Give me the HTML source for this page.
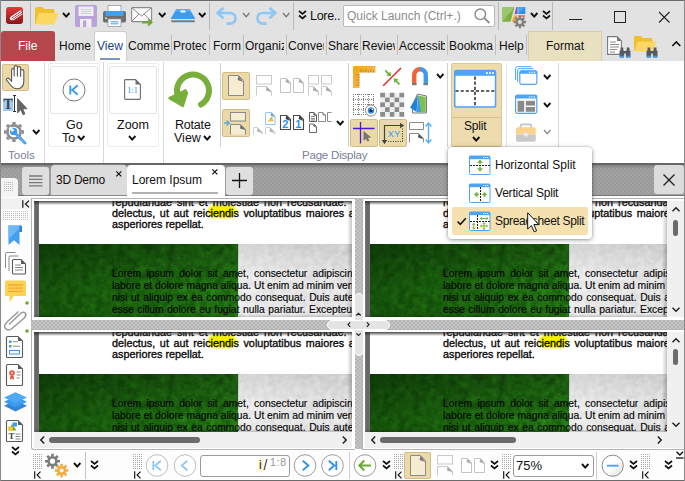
<!DOCTYPE html>
<html><head><meta charset="utf-8"><title>PDF-XChange Editor</title>
<style>
html,body{margin:0;padding:0}
body{width:685px;height:481px;position:relative;overflow:hidden;background:#e2e2e2;font-family:"Liberation Sans",sans-serif;font-size:12px;color:#111}
.a{position:absolute}
.t{position:absolute;white-space:nowrap;line-height:14px}
.vs{position:absolute;width:1px;background:#bdbdbd}
svg{position:absolute;overflow:visible}
.tan{position:absolute;background:#ecd9a8;border:1px solid #d2bd88;box-sizing:border-box;border-radius:2px}
.doc{position:absolute;overflow:hidden;background:#fff}
.dt{position:absolute;font-size:11px;line-height:12px;white-space:nowrap;color:#1a1a1a}
</style></head><body>
<!-- TITLE BAR -->
<div class="a" style="left:0;top:0;width:685px;height:61px;background:#e2e2e2"></div><svg style="left:6px;top:7px" width="17" height="17" viewBox="0 0 17 17"><defs><linearGradient id="ag" x1="0" y1="0" x2="0" y2="1"><stop offset="0" stop-color="#e23a3a"/><stop offset="1" stop-color="#8c1414"/></linearGradient></defs><clipPath id="ac"><rect x="0" y="0" width="17" height="17" rx="3"/></clipPath><rect x="0" y="0" width="17" height="17" rx="3" fill="url(#ag)"/><g clip-path="url(#ac)"><path d="M2.6 13.2 L4.4 9.6 L15 2.6 Q16.6 4.6 16.8 7.4 L7.6 13.6 Z" fill="#fff" stroke="#7a1010" stroke-width=".5"/><path d="M5.4 11.2 L15.8 4.2 M6.6 12.5 L16.5 5.9" stroke="#c0282c" stroke-width=".9" fill="none"/><path d="M2.6 13.2 L3.5 11.4 L4.8 13.3 Z" fill="#7a1010"/></g></svg><div class="vs" style="left:30px;top:2px;height:28px;background:#b9b9b9"></div><svg style="left:35px;top:7px" width="24" height="18" viewBox="0 0 24 18"><path d="M0 1.5 Q0 0 1.5 0 L7.5 0 L9.5 2 L18 2 Q19.5 2 19.5 3.5 L19.5 17 L0 17 Z" fill="#efbf2d"/><path d="M3.8 6 L23.5 6 L19.5 17.5 L0.2 17.5 Z" fill="#fcd762"/></svg><svg style="left:63.3px;top:13px" width="6.4" height="4.6"><polyline points="0,0 3.2,3.6 6.4,0" fill="none" stroke="#111" stroke-width="1.9"/></svg><svg style="left:75px;top:5px" width="22" height="22" viewBox="0 0 22 22"><rect x="0" y="0" width="22" height="22" rx="2" fill="#b7a3d9"/><rect x="3.5" y="1.5" width="15" height="9.5" fill="#eee"/><path d="M6 4.5h10M6 6.5h10M6 8.5h10" stroke="#c9c9c9" stroke-width=".8"/><rect x="5" y="14" width="11.5" height="8" fill="#eee"/><rect x="8" y="15.5" width="3.2" height="6.5" fill="#b7a3d9"/></svg><svg style="left:103px;top:5px" width="23" height="22" viewBox="0 0 23 22"><rect x="5" y="0.5" width="13" height="7" fill="#fff" stroke="#9a9a9a" stroke-width=".8"/><rect x="0" y="6" width="23" height="11.5" rx="2" fill="#6e6e6e"/><rect x="2.5" y="6" width="18" height="5" fill="#3fa0f0"/><rect x="5" y="14" width="13" height="7.5" fill="#fff" stroke="#9a9a9a" stroke-width=".8"/><path d="M7.5 16.8h8M7.5 18.8h8" stroke="#3fa0f0" stroke-width="1"/><rect x="2" y="12.5" width="2" height="1.5" fill="#ddd"/></svg><svg style="left:131px;top:7px" width="23" height="19" viewBox="0 0 23 19"><rect x="0.6" y="0.6" width="20" height="14" rx="1" fill="#fafafa" stroke="#8a8a8a" stroke-width="1.1"/><path d="M1 1 L10.6 9 L20.2 1 M1 14 L8 7 M20.2 14 L13.2 7" fill="none" stroke="#8a8a8a" stroke-width="1"/><path d="M11 15.5h9M17 12.3l3.6 3.2-3.6 3.2" fill="none" stroke="#6aa82e" stroke-width="1.8"/></svg><svg style="left:159.3px;top:13px" width="6.4" height="4.6"><polyline points="0,0 3.2,3.6 6.4,0" fill="none" stroke="#111" stroke-width="1.9"/></svg><svg style="left:170px;top:9px" width="26" height="14" viewBox="0 0 26 14"><path d="M6.5 0 L19.5 0 L25.5 10 L0.5 10 Z" fill="#3d9bee"/><path d="M6.5 0 L19.5 0 L21 2.6 L5 2.6 Z" fill="#57b0f7"/><rect x="10.5" y="1.6" width="5" height="1.8" rx=".5" fill="#fff"/><rect x="1" y="11.2" width="24" height="2" rx="1" fill="#7b7b7b"/></svg><svg style="left:199.3px;top:13px" width="6.4" height="4.6"><polyline points="0,0 3.2,3.6 6.4,0" fill="none" stroke="#111" stroke-width="1.9"/></svg><div class="vs" style="left:209px;top:2px;height:28px;background:#b9b9b9"></div><svg style="left:216px;top:7px" width="21" height="18" viewBox="0 0 21 18"><path d="M7.5 0.8 L1.6 6 L7.5 11.2 M2 6 L13.5 6 Q19.5 6 19.5 11.3 Q19.5 16.6 13.5 16.6 L10.5 16.6" fill="none" stroke="#8ec6f5" stroke-width="2.6"/></svg><svg style="left:243.3px;top:13px" width="6.4" height="4.6"><polyline points="0,0 3.2,3.6 6.4,0" fill="none" stroke="#7a7a7a" stroke-width="1.4"/></svg><svg style="left:256px;top:7px" width="21" height="18" viewBox="0 0 21 18"><path d="M13.5 0.8 L19.4 6 L13.5 11.2 M19 6 L7.5 6 Q1.5 6 1.5 11.3 Q1.5 16.6 7.5 16.6 L10.5 16.6" fill="none" stroke="#8ec6f5" stroke-width="2.6"/></svg><svg style="left:283.3px;top:13px" width="6.4" height="4.6"><polyline points="0,0 3.2,3.6 6.4,0" fill="none" stroke="#7a7a7a" stroke-width="1.4"/></svg><div class="vs" style="left:293px;top:2px;height:28px;background:#b9b9b9"></div><svg style="left:299px;top:11px" width="7" height="9"><polyline points="0,0 3.5,3 7,0" fill="none" stroke="#111" stroke-width="1.7"/><polyline points="0,4.5 3.5,7.5 7,4.5" fill="none" stroke="#111" stroke-width="1.7"/></svg><div class="t" style="left:310px;top:9px;font-size:12.5px;letter-spacing:-.3px">Lore..</div><div class="a" style="left:343px;top:5px;width:152px;height:22px;box-sizing:border-box;background:#fff;border:1px solid #b9b9b9;border-radius:2px"></div><div class="t" style="left:347px;top:9px;color:#8c8c8c">Quick Launch (Ctrl+.)</div><svg style="left:474px;top:8px" width="17" height="16" viewBox="0 0 17 16"><circle cx="6.3" cy="6.3" r="5.3" fill="none" stroke="#8a8a8a" stroke-width="1.4"/><path d="M10.2 10.2 L15.5 15" stroke="#8a8a8a" stroke-width="1.8"/></svg><div class="vs" style="left:498px;top:2px;height:28px;background:#b9b9b9"></div><svg style="left:0;top:0" width="685" height="32"><defs><linearGradient id="gt" x1="0" y1="0" x2="1" y2="1"><stop offset="0.5" stop-color="#9cc56e"/><stop offset="0.5" stop-color="#7db343"/></linearGradient></defs><path d="M503.5 7 H514.5 L510.5 21.8 H503.5 Q502 21.8 502 20.3 V8.5 Q502 7 503.5 7Z" fill="url(#gt)"/><path d="M516.4 7H517.6V14H514.4Z" fill="#7e57c2"/><rect x="518.2" y="7" width="7" height="7" fill="#42a5f5"/><path d="M518.2 14L525.2 7V14Z" fill="#2f8fe6"/><path d="M514 15.2H517.4V21.8H511.6Z" fill="#f5a93a"/><rect x="518.2" y="15.2" width="7" height="1.6" fill="#ef6c4a"/><circle cx="519.9" cy="22" r="3.1" fill="none" stroke="#808080" stroke-width="2.3"/><path d="M523.30 22.00L526.11 22.00M522.30 24.40L524.29 26.39M519.90 25.40L519.90 28.20M517.50 24.40L515.51 26.39M516.50 22.00L513.69 22.00M517.50 19.60L515.51 17.61M519.90 18.60L519.90 15.79M522.30 19.60L524.29 17.61" stroke="#808080" stroke-width="2.3"/></svg><svg style="left:531.3px;top:13.3px" width="6.4" height="4.6"><polyline points="0,0 3.2,3.6 6.4,0" fill="none" stroke="#111" stroke-width="1.9"/></svg><svg style="left:543px;top:11px" width="7" height="9"><polyline points="0,0 3.5,3 7,0" fill="none" stroke="#111" stroke-width="1.7"/><polyline points="0,4.5 3.5,7.5 7,4.5" fill="none" stroke="#111" stroke-width="1.7"/></svg><div class="vs" style="left:552px;top:2px;height:28px;background:#b9b9b9"></div><div class="a" style="left:569px;top:19px;width:13px;height:1.2px;background:#222"></div><div class="a" style="left:614px;top:11px;width:12px;height:12px;box-sizing:border-box;border:1.1px solid #222"></div><svg style="left:659px;top:12px" width="11" height="11"><path d="M0 0L10.5 10.5M10.5 0L0 10.5" stroke="#222" stroke-width="1.1"/></svg><div class="a" style="left:1px;top:31px;width:54px;height:29.5px;background:#b4474b;border-radius:3px 3px 0 0"></div><div class="t" style="left:18px;top:39px;color:#fff">File</div><div class="t" style="left:59px;top:39px;">Home</div><div class="a" style="left:94px;top:31px;width:33px;height:31px;box-sizing:border-box;background:#fff;border:1px solid #cfcfcf;border-bottom:none;border-radius:3px 3px 0 0"></div><div class="t" style="left:97px;top:39px;color:#1b3f7a">View</div><div class="a" style="left:100px;top:58px;width:20px;height:2px;background:#7d97c4"></div><div class="a" style="left:128px;top:36px;width:42px;height:18px;overflow:hidden"><div class="t" style="left:0;top:3px">Comments</div></div><div class="vs" style="left:171px;top:35px;height:20px;background:#bdbdbd"></div><div class="a" style="left:173px;top:36px;width:33px;height:18px;overflow:hidden"><div class="t" style="left:0;top:3px">Protect</div></div><div class="vs" style="left:209px;top:35px;height:20px;background:#bdbdbd"></div><div class="a" style="left:213px;top:36px;width:28px;height:18px;overflow:hidden"><div class="t" style="left:0;top:3px">Form</div></div><div class="vs" style="left:243px;top:35px;height:20px;background:#bdbdbd"></div><div class="a" style="left:245px;top:36px;width:39px;height:18px;overflow:hidden"><div class="t" style="left:0;top:3px">Organize</div></div><div class="vs" style="left:286px;top:35px;height:20px;background:#bdbdbd"></div><div class="a" style="left:288px;top:36px;width:36px;height:18px;overflow:hidden"><div class="t" style="left:0;top:3px">Convert</div></div><div class="vs" style="left:326px;top:35px;height:20px;background:#bdbdbd"></div><div class="a" style="left:328px;top:36px;width:30px;height:18px;overflow:hidden"><div class="t" style="left:0;top:3px">Share</div></div><div class="vs" style="left:360px;top:35px;height:20px;background:#bdbdbd"></div><div class="a" style="left:362px;top:36px;width:33px;height:18px;overflow:hidden"><div class="t" style="left:0;top:3px">Review</div></div><div class="vs" style="left:397px;top:35px;height:20px;background:#bdbdbd"></div><div class="a" style="left:399px;top:36px;width:46px;height:18px;overflow:hidden"><div class="t" style="left:0;top:3px">Accessibility</div></div><div class="vs" style="left:447px;top:35px;height:20px;background:#bdbdbd"></div><div class="a" style="left:449px;top:36px;width:43.5px;height:18px;overflow:hidden"><div class="t" style="left:0;top:3px">Bookmarks</div></div><div class="vs" style="left:495px;top:35px;height:20px;background:#bdbdbd"></div><div class="t" style="left:499px;top:39px;">Help</div><div class="vs" style="left:526px;top:35px;height:20px;background:#bdbdbd"></div><div class="a" style="left:528px;top:31px;width:74px;height:30px;box-sizing:border-box;background:#e8e0bf;border:1px solid #d9cfa6;border-bottom:none"></div><div class="t" style="left:546px;top:39px;">Format</div><svg style="left:607px;top:36px" width="24" height="22" viewBox="0 0 24 22"><path d="M0.6 0.6 L10 0.6 L14.4 5 L14.4 18.4 L0.6 18.4 Z" fill="#fff" stroke="#7a7a7a" stroke-width="1.1"/><path d="M10 0.6 L10 5 L14.4 5 Z" fill="#7a7a7a"/><path d="M3 6h6M3 8.5h9M3 11h9M3 13.5h7M3 16h5" stroke="#8a8a8a" stroke-width="1"/><g transform="translate(12.5,11.5)"><g fill="#555a62"><rect x="0" y="3" width="4.6" height="7" rx="1"/><rect x="6.4" y="3" width="4.6" height="7" rx="1"/><rect x="1" y="0" width="2.8" height="4" /><rect x="7.2" y="0" width="2.8" height="4"/><rect x="4" y="3.5" width="3" height="2.5"/></g><rect x="0.3" y="8.2" width="4" height="1.8" fill="#3d9bee"/><rect x="6.7" y="8.2" width="4" height="1.8" fill="#3d9bee"/></g></svg><svg style="left:634px;top:36px" width="24" height="22" viewBox="0 0 24 22"><path d="M0 1.5 Q0 0 1.5 0 L7 0 L9 2 L17 2 Q18.5 2 18.5 3.5 L18.5 15 L0 15 Z" fill="#efbf2d"/><path d="M3.5 5.5 L22.5 5.5 L18.5 15.5 L0.2 15.5 Z" fill="#fcd762"/><g transform="translate(12.5,11.5)"><g fill="#555a62"><rect x="0" y="3" width="4.6" height="7" rx="1"/><rect x="6.4" y="3" width="4.6" height="7" rx="1"/><rect x="1" y="0" width="2.8" height="4" /><rect x="7.2" y="0" width="2.8" height="4"/><rect x="4" y="3.5" width="3" height="2.5"/></g><rect x="0.3" y="8.2" width="4" height="1.8" fill="#3d9bee"/><rect x="6.7" y="8.2" width="4" height="1.8" fill="#3d9bee"/></g></svg><svg style="left:672px;top:41px" width="9" height="6"><polyline points="0.3,5 4.3,1 8.3,5" fill="none" stroke="#111" stroke-width="1.7"/></svg>
<!-- RIBBON -->
<div class="a" style="left:1px;top:61px;width:683px;height:102px;background:#fff"></div><div class="a" style="left:0;top:163px;width:685px;height:1px;background:#cfcfcf"></div><div class="tan" style="left:2px;top:64px;width:27px;height:27px"></div><svg style="left:5px;top:64px" width="21" height="26" viewBox="0 0 21 26"><path d="M6.6 17 L6.6 6 Q6.6 4.6 7.9 4.6 Q9.2 4.6 9.2 6 L9.2 12 L9.2 3 Q9.2 1.6 10.8 1.6 Q12.4 1.6 12.4 3 L12.4 12 L12.4 4 Q12.4 2.6 14 2.6 Q15.6 2.6 15.6 4 L15.6 12.5 L15.6 7 Q15.6 5.6 17.2 5.6 Q18.8 5.6 18.8 7 L18.8 17 Q18.8 24.8 12.2 24.8 Q8.6 24.8 6.4 22 L1.6 16.2 Q0.9 15 2 14.4 Q3.3 13.8 4.3 14.8 L6.6 17.3 Z" fill="#fff" stroke="#5a5a5a" stroke-width="1.1" stroke-linejoin="round"/></svg><div class="a" style="left:3px;top:98px;width:10px;height:13px;background:#9fcbf3"></div><div class="t" style="left:3.5px;top:97px;font-family:'Liberation Serif',serif;font-weight:bold;font-size:14px;line-height:15px;color:#444">T</div><svg style="left:12px;top:95px" width="16" height="21" viewBox="0 0 16 21"><path d="M1 0.5h3M2.5 0.5v16M1 16.5h3" stroke="#333" stroke-width="1" fill="none"/><path d="M5.5 3.5 L5.5 18 L8.8 14.8 L11 19.8 L13 18.9 L10.8 14 L15 13.6 Z" fill="#666" stroke="#444" stroke-width=".6"/></svg><svg style="left:0;top:0" width="48" height="170"><circle cx="14" cy="132" r="6.6" fill="none" stroke="#8e8e8e" stroke-width="2.7"/><path d="M21.50 132.00L24.00 132.00M19.30 137.30L21.07 139.07M14.00 139.50L14.00 142.00M8.70 137.30L6.93 139.07M6.50 132.00L4.00 132.00M8.70 126.70L6.93 124.93M14.00 124.50L14.00 122.00M19.30 126.70L21.07 124.93" stroke="#8e8e8e" stroke-width="3.3"/><path d="M15.5 133.5L25 143" stroke="#3d9bee" stroke-width="2.8" stroke-linecap="round"/><path d="M15.5 133.5L25 143" stroke="#bfe0fb" stroke-width="1" stroke-dasharray="0.8 1"/><circle cx="13.6" cy="131.4" r="3.7" fill="#3d9bee"/><path d="M9.5 127.5L13.3 131" stroke="#fff" stroke-width="2.6"/></svg><svg style="left:32.8px;top:130.2px" width="6.4" height="4.6"><polyline points="0,0 3.2,3.6 6.4,0" fill="none" stroke="#111" stroke-width="1.9"/></svg><div class="t" style="left:8px;top:148px;color:#777e96;font-size:11.5px">Tools</div><div class="vs" style="left:44px;top:62px;height:101px;background:#d8d8d8"></div><div class="a" style="left:48px;top:63px;width:52px;height:84px;box-sizing:border-box;border:1px solid #ececec;border-radius:2px"></div><div class="a" style="left:50px;top:66px;width:48px;height:48px;box-sizing:border-box;border:1px solid #e3e3e3;border-radius:2px"></div><svg style="left:62px;top:78px" width="24" height="24" viewBox="0 0 24 24"><circle cx="12" cy="12" r="11" fill="#fff" stroke="#7d7d7d" stroke-width="1"/><path d="M8.3 7.5V16.5M15.7 7.3L10.3 12L15.7 16.7" fill="none" stroke="#3d9bee" stroke-width="1.9"/></svg><div class="t" style="left:66px;top:118px;font-size:12.5px">Go</div><div class="t" style="left:62px;top:131px;font-size:12.5px">To</div><svg style="left:78.3px;top:136px" width="6.4" height="4.6"><polyline points="0,0 3.2,3.6 6.4,0" fill="none" stroke="#111" stroke-width="1.9"/></svg><div class="vs" style="left:103px;top:62px;height:101px;background:#d8d8d8"></div><div class="a" style="left:107px;top:63px;width:52px;height:84px;box-sizing:border-box;border:1px solid #ececec;border-radius:2px"></div><div class="a" style="left:109px;top:66px;width:48px;height:48px;box-sizing:border-box;border:1px solid #e3e3e3;border-radius:2px"></div><svg style="left:124px;top:79px" width="18" height="22" viewBox="0 0 18 22"><path d="M1.5 0.6 L11.5 0.6 L16.4 5.5 L16.4 19.5 Q16.4 20.4 15.5 20.4 L1.5 20.4 Q0.6 20.4 0.6 19.5 L0.6 1.5 Q0.6 0.6 1.5 0.6 Z" fill="#fff" stroke="#6e6e6e" stroke-width="1.1"/><path d="M11.5 0.6 L16.4 5.5 L11.5 5.5 Z" fill="#6e6e6e"/></svg><div class="t" style="left:127px;top:85px;font-family:'Liberation Serif',serif;font-size:9px;line-height:10px;color:#3d9bee;letter-spacing:-.3px">1:1</div><div class="t" style="left:117px;top:118px;font-size:12.5px">Zoom</div><svg style="left:129.3px;top:136px" width="6.4" height="4.6"><polyline points="0,0 3.2,3.6 6.4,0" fill="none" stroke="#111" stroke-width="1.9"/></svg><div class="vs" style="left:163px;top:62px;height:101px;background:#d8d8d8"></div><svg style="left:160px;top:62px" width="60" height="50" viewBox="0 0 60 50"><path d="M17.6 33 A16 16 0 1 1 41 42.5" fill="none" stroke="#7aae3c" stroke-width="6" stroke-linecap="round"/><path d="M9.5 36.2 L25.5 28.3 L27 31 L22.8 44 Z" fill="#7aae3c" stroke="#7aae3c" stroke-width="2.4" stroke-linejoin="round"/></svg><div class="t" style="left:175px;top:118px;font-size:12.5px;letter-spacing:-.2px">Rotate</div><div class="t" style="left:174px;top:131px;font-size:12.5px">View</div><svg style="left:204.3px;top:136px" width="6.4" height="4.6"><polyline points="0,0 3.2,3.6 6.4,0" fill="none" stroke="#111" stroke-width="1.9"/></svg><div class="vs" style="left:220px;top:63px;height:84px;background:#d0d0d0"></div><div class="tan" style="left:222px;top:72px;width:28px;height:28px"></div><div class="tan" style="left:222px;top:109px;width:28px;height:28px"></div><svg style="left:0;top:0" width="685" height="170" viewBox="0 0 685 170"><path d="M228.5 75.5 L238.5 75.5 L243.5 80.5 L243.5 95.5 L228.5 95.5 Z" fill="#f6ecd2" stroke="#8a8a8a" stroke-width="1" stroke-linejoin="round"/><path d="M238.5 75.5 L243.5 82.0 L237.5 80.0 Z" fill="#7a7a7a"/><rect x="256.5" y="75.5" width="15" height="8.5" fill="none" stroke="#c9c9c9" stroke-width="1"/><path d="M256.5 95.5 L256.5 86.5 L266.5 86.5 L271.5 91.5 L271.5 95.5" fill="none" stroke="#c9c9c9" stroke-width="1"/><path d="M266.5 86.5 L271.8 92.3 L266.0 90.5 Z" fill="#a8a8a8"/><path d="M280.5 78.5 L286.5 78.5 L290.5 82.5 L290.5 92.5 L280.5 92.5 Z" fill="#fff" stroke="#c4c4c4" stroke-width="1" stroke-linejoin="round"/><path d="M286.5 78.5 L290.5 84.0 L285.5 82.0 Z" fill="#a8a8a8"/><path d="M293.5 78.5 L299.5 78.5 L303.5 82.5 L303.5 92.5 L293.5 92.5 Z" fill="#fff" stroke="#c4c4c4" stroke-width="1" stroke-linejoin="round"/><path d="M299.5 78.5 L303.5 84.0 L298.5 82.0 Z" fill="#a8a8a8"/><rect x="308.5" y="75.5" width="10" height="8.5" fill="none" stroke="#c9c9c9" stroke-width="1"/><rect x="321.5" y="75.5" width="10" height="8.5" fill="none" stroke="#c9c9c9" stroke-width="1"/><path d="M308.5 95.5 L308.5 86.5 L313.5 86.5 L318.5 91.5 L318.5 95.5" fill="none" stroke="#c9c9c9" stroke-width="1"/><path d="M313.5 86.5 L318.8 92.3 L313.0 90.5 Z" fill="#a8a8a8"/><path d="M321.5 95.5 L321.5 86.5 L326.5 86.5 L331.5 91.5 L331.5 95.5" fill="none" stroke="#c9c9c9" stroke-width="1"/><path d="M326.5 86.5 L331.8 92.3 L326.0 90.5 Z" fill="#a8a8a8"/><rect x="230.5" y="112.5" width="15" height="8.5" fill="#f6ecd2" stroke="#8a8a8a" stroke-width="1"/><path d="M230.5 134.5 L230.5 124.5 L240.5 124.5 L245.5 129.5 L245.5 134.5" fill="#f6ecd2" stroke="#8a8a8a" stroke-width="1"/><path d="M240.5 124.5 L245.8 130.3 L240.0 128.5 Z" fill="#6e6e6e"/><path d="M224 123h4M226.5 120.5l2.8 2.5-2.8 2.5" fill="none" stroke="#5aa9e6" stroke-width="1.5"/><path d="M265.5 112.5 L271.5 112.5 L275.0 116.0 L275.0 124.5 L265.5 124.5 Z" fill="#fff" stroke="#8ec6f5" stroke-width="1" stroke-linejoin="round"/><path d="M271.5 112.5 L275.0 117.5 L270.5 115.5 Z" fill="#7a9ab8"/><path d="M267.5 121.5l2.5-3 2 1.8 1.5-1 0 2.2z" fill="#f0c040"/><circle cx="271.5" cy="118.5" r="1.2" fill="#8bc34a"/><path d="M253.5 134.5 L253.5 127.5 L257.5 127.5 L262.5 132.5 L262.5 134.5" fill="none" stroke="#d0d0d0" stroke-width="1"/><path d="M257.5 127.5 L262.8 133.3 L257.0 131.5 Z" fill="#b5b5b5"/><path d="M265.5 134.5 L265.5 127.5 L270.0 127.5 L275.0 132.5 L275.0 134.5" fill="none" stroke="#d0d0d0" stroke-width="1"/><path d="M270.0 127.5 L275.3 133.3 L269.5 131.5 Z" fill="#b5b5b5"/><path d="M280.5 115.5 L286.5 115.5 L290.5 119.5 L290.5 129.5 L280.5 129.5 Z" fill="#fff" stroke="#4a4a4a" stroke-width="1.1" stroke-linejoin="round"/><path d="M286.5 115.5 L290.5 121.0 L285.5 119.0 Z" fill="#3a3a3a"/><path d="M293.5 115.5 L299.5 115.5 L303.5 119.5 L303.5 129.5 L293.5 129.5 Z" fill="#fff" stroke="#4a4a4a" stroke-width="1.1" stroke-linejoin="round"/><path d="M299.5 115.5 L303.5 121.0 L298.5 119.0 Z" fill="#3a3a3a"/><path d="M309.5 112.5 L314.0 112.5 L316.5 115.0 L316.5 121.5 L309.5 121.5 Z" fill="#fff" stroke="#5a5a5a" stroke-width="1" stroke-linejoin="round"/><path d="M314.0 112.5 L316.5 116.5 L313.0 114.5 Z" fill="#5a5a5a"/><path d="M311 116.5h4M311 118.5h4M311 120h4" stroke="#5a5a5a" stroke-width=".8"/><path d="M318.5 112.5 L323.0 112.5 L325.5 115.0 L325.5 121.5 L318.5 121.5 Z" fill="#fff" stroke="#8a8a8a" stroke-width="1" stroke-linejoin="round"/><path d="M323.0 112.5 L325.5 116.5 L322.0 114.5 Z" fill="#8a8a8a"/><path d="M331.5 112.5h-4v9h4" fill="none" stroke="#8a8a8a" stroke-width="1"/><path d="M309.5 124 L314.0 124 L316.5 126.5 L316.5 132.5 L309.5 132.5 Z" fill="#fff" stroke="#6a6a6a" stroke-width="1" stroke-linejoin="round"/><path d="M314.0 124 L316.5 128.0 L313.0 126.0 Z" fill="#6a6a6a"/></svg><div class="t" style="left:282.3px;top:118.5px;font-size:11px;line-height:11px;color:#2f93ea;font-weight:bold">2</div><div class="t" style="left:295.3px;top:118.5px;font-size:11px;line-height:11px;color:#2f93ea;font-weight:bold">1</div><svg style="left:337.3px;top:120.5px" width="6.4" height="4.6"><polyline points="0,0 3.2,3.6 6.4,0" fill="none" stroke="#111" stroke-width="1.9"/></svg><div class="t" style="left:302px;top:148px;color:#777e96;font-size:11.5px;letter-spacing:-.2px">Page Display</div><div class="vs" style="left:348px;top:63px;height:84px;background:#d0d0d0"></div><div class="tan" style="left:350px;top:119px;width:28px;height:28px"></div><div class="tan" style="left:379px;top:119px;width:28px;height:28px"></div><svg style="left:0;top:0" width="685" height="170" viewBox="0 0 685 170"><defs><linearGradient id="rul" x1="0" y1="0" x2="1" y2="1"><stop offset="0" stop-color="#f5a01e"/><stop offset="1" stop-color="#fbc566"/></linearGradient></defs><path d="M354.5 66 L375.5 66 L375.5 72.5 L359.5 72.5 L359.5 88 L353 88 L353 67.5 Q353 66 354.5 66 Z" fill="url(#rul)"/><path d="M361 69v3.5M363.5 70.5v2M366 69v3.5M368.5 70.5v2M371 69v3.5M373.5 70.5v2M356 75h3.5M357.5 77.5h2M356 80h3.5M357.5 82.5h2M356 85h3.5" stroke="#b97814" stroke-width=".8"/><path d="M383.2 85.8 L401 67.9" stroke="#e8212b" stroke-width="1.4"/><path d="M385.3 70.3 L388.6 73.8" stroke="#6fb13a" stroke-width="1.8"/><path d="M391.2 76.6 L386.3 75.6 L390.4 71.7 Z" fill="#6fb13a"/><path d="M399.4 84.4 L396.1 80.9" stroke="#6fb13a" stroke-width="1.8"/><path d="M393.6 78.2 L398.5 79.2 L394.4 83.1 Z" fill="#6fb13a"/><path d="M414.2 85 L414.2 75 A5.8 5.8 0 0 1 420 69.2" fill="none" stroke="#f0643c" stroke-width="4.4"/><path d="M420 69.2 A5.8 5.8 0 0 1 425.8 75 L425.8 85" fill="none" stroke="#3d9bee" stroke-width="4.4"/><rect x="412" y="83" width="4.4" height="2.2" fill="#7a7a7a"/><rect x="423.6" y="83" width="4.4" height="2.2" fill="#7a7a7a"/><path d="M353 94.5h21" stroke="#7d7d7d" stroke-width="1" stroke-dasharray="1 1"/><path d="M353.5 94v21" stroke="#7d7d7d" stroke-width="1" stroke-dasharray="1 1"/><path d="M353 99.5h21" stroke="#7d7d7d" stroke-width="1" stroke-dasharray="1 1"/><path d="M358.5 94v21" stroke="#7d7d7d" stroke-width="1" stroke-dasharray="1 1"/><path d="M353 104.5h21" stroke="#7d7d7d" stroke-width="1" stroke-dasharray="1 1"/><path d="M363.5 94v21" stroke="#7d7d7d" stroke-width="1" stroke-dasharray="1 1"/><path d="M353 109.5h21" stroke="#7d7d7d" stroke-width="1" stroke-dasharray="1 1"/><path d="M368.5 94v21" stroke="#7d7d7d" stroke-width="1" stroke-dasharray="1 1"/><path d="M353 114.5h21" stroke="#7d7d7d" stroke-width="1" stroke-dasharray="1 1"/><path d="M373.5 94v21" stroke="#7d7d7d" stroke-width="1" stroke-dasharray="1 1"/><circle cx="371" cy="110.5" r="5.6" fill="#fff" stroke="#8a8a8a" stroke-width="1"/><circle cx="371" cy="110.5" r="3.3" fill="#3d8fe0"/><circle cx="371" cy="110.5" r="1.6" fill="#1a2a3a"/><circle cx="372.3" cy="109.3" r=".8" fill="#fff"/><rect x="380.2" y="92.8" width="4.8" height="4.8" fill="#8c8c8c"/><rect x="385.0" y="92.8" width="4.8" height="4.8" fill="#efefef"/><rect x="389.8" y="92.8" width="4.8" height="4.8" fill="#8c8c8c"/><rect x="394.6" y="92.8" width="4.8" height="4.8" fill="#efefef"/><rect x="399.4" y="92.8" width="4.8" height="4.8" fill="#8c8c8c"/><rect x="380.2" y="97.6" width="4.8" height="4.8" fill="#efefef"/><rect x="385.0" y="97.6" width="4.8" height="4.8" fill="#8c8c8c"/><rect x="389.8" y="97.6" width="4.8" height="4.8" fill="#efefef"/><rect x="394.6" y="97.6" width="4.8" height="4.8" fill="#8c8c8c"/><rect x="399.4" y="97.6" width="4.8" height="4.8" fill="#efefef"/><rect x="380.2" y="102.4" width="4.8" height="4.8" fill="#8c8c8c"/><rect x="385.0" y="102.4" width="4.8" height="4.8" fill="#efefef"/><rect x="389.8" y="102.4" width="4.8" height="4.8" fill="#8c8c8c"/><rect x="394.6" y="102.4" width="4.8" height="4.8" fill="#efefef"/><rect x="399.4" y="102.4" width="4.8" height="4.8" fill="#8c8c8c"/><rect x="380.2" y="107.2" width="4.8" height="4.8" fill="#efefef"/><rect x="385.0" y="107.2" width="4.8" height="4.8" fill="#8c8c8c"/><rect x="389.8" y="107.2" width="4.8" height="4.8" fill="#efefef"/><rect x="394.6" y="107.2" width="4.8" height="4.8" fill="#8c8c8c"/><rect x="399.4" y="107.2" width="4.8" height="4.8" fill="#efefef"/><rect x="380.2" y="112.0" width="4.8" height="4.8" fill="#8c8c8c"/><rect x="385.0" y="112.0" width="4.8" height="4.8" fill="#efefef"/><rect x="389.8" y="112.0" width="4.8" height="4.8" fill="#8c8c8c"/><rect x="394.6" y="112.0" width="4.8" height="4.8" fill="#efefef"/><rect x="399.4" y="112.0" width="4.8" height="4.8" fill="#8c8c8c"/><path d="M417.5 94 L426.5 96 L426.5 113 L412.5 113 L412.5 105 Z" fill="#f2f2f2" stroke="#7a7a7a" stroke-width="1"/><path d="M418 95 L410 107.5 L416.5 112 Z" fill="#1f84d6"/><path d="M418.5 95.5 L425.7 97 L425.7 112.3 L417 112.3 Z" fill="#7fbf4d"/><path d="M418.5 95 L416.5 112.3 L421 112.3 Z" fill="#3d9bee"/><path d="M360.5 122V143.5M353 128.5H374.5" stroke="#4a1fd0" stroke-width="1.3"/><path d="M363.8 131.5 L363.8 140.3 L366 138.4 L367.7 141.3 L369.1 140.6 L367.5 137.7 L370.7 137.3 Z" fill="#777" stroke="#555" stroke-width=".4"/><path d="M384.5 142 V125.5 H402" fill="none" stroke="#444" stroke-width="1.2"/><path d="M400 122.8 L404.3 125.5 L400 128.2 Z M381.8 140 L384.5 144.3 L387.2 140 Z" fill="#444"/><path d="M402.5 128.5V141.5H387" fill="none" stroke="#444" stroke-width="1.1" stroke-dasharray="1.1 1.3"/><path d="M409.5 122.5H423.5V129.5H409.5Z" fill="none" stroke="#8a8a8a" stroke-width="1"/><path d="M409.5 142.5 L409.5 133.5 L418.5 133.5 L423.5 138.5 L423.5 142.5" fill="none" stroke="#8a8a8a" stroke-width="1"/><path d="M418.5 133.5 L423.8 139.3 L418.0 137.5 Z" fill="#555"/><path d="M428.5 124V142" stroke="#5aaef0" stroke-width="1.4"/><path d="M425.6 126.5L428.5 123L431.4 126.5M425.6 139.5L428.5 143L431.4 139.5" fill="none" stroke="#5aaef0" stroke-width="1.4"/></svg><div class="t" style="left:387.5px;top:128.5px;font-size:9.5px;line-height:10px;color:#3d9bee;letter-spacing:.2px">XY</div><svg style="left:437.3px;top:74px" width="6.4" height="4.6"><polyline points="0,0 3.2,3.6 6.4,0" fill="none" stroke="#111" stroke-width="1.9"/></svg><div class="vs" style="left:447px;top:63px;height:84px;background:#d0d0d0"></div><div class="a" style="left:451px;top:63px;width:51px;height:84px;box-sizing:border-box;background:#efdcae;border:1px solid #dcc894;border-radius:2px"></div><div class="a" style="left:452px;top:117px;width:49px;height:1px;background:#d6c18c"></div><svg style="left:0;top:0" width="685" height="170" viewBox="0 0 685 170"><rect x="454.75" y="70.45" width="40.8" height="36.5" rx="1.8" fill="#fff" stroke="#4da3f5" stroke-width="1.5"/><path d="M454.5 75.7 V71.7 Q454.5 70.2 456 70.2 H494.3 Q495.8 70.2 495.8 71.7 V75.7 Z" fill="#4da3f5"/><rect x="486.00" y="72.10" width="1.80" height="1.80" fill="#fff"/><rect x="489.00" y="72.10" width="1.80" height="1.80" fill="#fff"/><rect x="492.00" y="72.10" width="1.80" height="1.80" fill="#fff"/><path d="M475 76.5V106.5M455.5 91H495" stroke="#333" stroke-width="1.6" stroke-dasharray="3.2 1.9"/><path d="M515.6 80V68.5Q515.6 66.7 517.4 66.7H531.5M517.6 82V70.3Q517.6 68.7 519.2 68.7H533.5" fill="none" stroke="#4da3f5" stroke-width="1"/><rect x="519.8000000000001" y="70.8" width="17.1" height="13.600000000000001" rx="1.8" fill="#fff" stroke="#4da3f5" stroke-width="1.2"/><path d="M519.7 73.8 V72.2 Q519.7 70.7 521.2 70.7 H535.5 Q537.0 70.7 537.0 72.2 V73.8 Z" fill="#4da3f5"/><rect x="529.00" y="71.70" width="1.20" height="1.20" fill="#fff"/><rect x="531.40" y="71.70" width="1.20" height="1.20" fill="#fff"/><rect x="533.80" y="71.70" width="1.20" height="1.20" fill="#fff"/><rect x="515.6" y="95.19999999999999" width="21.2" height="18.2" rx="1.8" fill="#fff" stroke="#4da3f5" stroke-width="1.2"/><path d="M515.5 98.6 V96.6 Q515.5 95.1 517 95.1 H535.4 Q536.9 95.1 536.9 96.6 V98.6 Z" fill="#4da3f5"/><rect x="528.90" y="96.30" width="1.20" height="1.20" fill="#fff"/><rect x="531.30" y="96.30" width="1.20" height="1.20" fill="#fff"/><rect x="533.70" y="96.30" width="1.20" height="1.20" fill="#fff"/><rect x="517.6" y="100.8" width="6.6" height="11" fill="#8a8a8a"/><rect x="525.8" y="100.8" width="9.2" height="4.8" fill="#8a8a8a"/><rect x="525.8" y="107" width="9.2" height="4.8" fill="#8a8a8a"/><path d="M520.5 128V126.3Q520.5 124.4 522.4 124.4H529.4Q531.3 124.4 531.3 126.3V128" fill="none" stroke="#c4c4c4" stroke-width="1.8"/><path d="M516 134.5V129Q516 127.2 517.8 127.2H534Q535.8 127.2 535.8 129V134.5Z" fill="#fbd48c"/><path d="M516 134.5H535.8V140Q535.8 141.8 534 141.8H517.8Q516 141.8 516 140Z" fill="#c9c9c9"/><circle cx="525.9" cy="134.5" r="2.2" fill="#ededed" stroke="#d8d8d8" stroke-width=".6"/></svg><div class="t" style="left:464px;top:118.5px;font-size:12px;letter-spacing:-.2px">Split</div><svg style="left:472.6px;top:136.5px" width="6.4" height="4.6"><polyline points="0,0 3.2,3.6 6.4,0" fill="none" stroke="#111" stroke-width="1.9"/></svg><div class="vs" style="left:506px;top:63px;height:84px;background:#e4e4e4"></div><svg style="left:543.8px;top:75px" width="6.4" height="4.6"><polyline points="0,0 3.2,3.6 6.4,0" fill="none" stroke="#111" stroke-width="1.9"/></svg><svg style="left:543.8px;top:102.5px" width="6.4" height="4.6"><polyline points="0,0 3.2,3.6 6.4,0" fill="none" stroke="#111" stroke-width="1.9"/></svg><svg style="left:543.8px;top:130px" width="6.4" height="4.6"><polyline points="0,0 3.2,3.6 6.4,0" fill="none" stroke="#8a8a8a" stroke-width="1.4"/></svg><div class="vs" style="left:558px;top:63px;height:84px;background:#d8d8d8"></div>
<!-- DOC TABS + MAIN -->
<div class="a" style="left:0;top:164px;width:685px;height:32px;background-color:#a3a3a3;background-image:linear-gradient(45deg,#9a9a9a 25%,transparent 25%,transparent 75%,#9a9a9a 75%),linear-gradient(45deg,#9a9a9a 25%,transparent 25%,transparent 75%,#9a9a9a 75%);background-size:4px 4px;background-position:0 0,2px 2px"></div><div class="a" style="left:0;top:163px;width:685px;height:1.5px;background:#666"></div><div class="a" style="left:0;top:164.5px;width:685px;height:4px;background:linear-gradient(rgba(0,0,0,.18),rgba(0,0,0,0))"></div><div class="a" style="left:0;top:195px;width:685px;height:1px;background:#777"></div><div class="a" style="left:1px;top:196px;width:683px;height:285px;background:#fdfdfd"></div><div class="a" style="left:1px;top:178px;width:17px;height:19px;background:#f4f4f4;border-radius:0 4px 0 0"></div><div class="a" style="left:4px;top:182px;width:10px;height:10px;background-image:radial-gradient(circle at 0.5px 0.5px,#b8b8b8 0.55px,transparent 0.8px);background-size:2px 2px"></div><div class="a" style="left:22px;top:167px;width:27px;height:28px;background:#dfdfdf;border-radius:3px;box-shadow:0 0 0 .5px #9a9a9a"></div><svg style="left:29px;top:175px" width="14" height="12"><path d="M0 1h13.5M0 4.3h13.5M0 7.6h13.5M0 10.9h13.5" stroke="#7a7a7a" stroke-width="1.3"/></svg><div class="a" style="left:51px;top:165px;width:76px;height:30px;background:#dcdcdc;border-radius:4px 4px 0 0;box-shadow:0 0 0 .5px #9a9a9a"></div><div class="t" style="left:56px;top:173px;letter-spacing:-.25px">3D Demo</div><svg style="left:116px;top:171px" width="6" height="6"><path d="M0.3 0.3L5.3 5.3M5.3 0.3L0.3 5.3" stroke="#111" stroke-width="1.2"/></svg><div class="a" style="left:127px;top:164.5px;width:98px;height:33px;background:#fff;border-radius:4px 4px 0 0"></div><div class="t" style="left:132px;top:173px;">Lorem Ipsum</div><svg style="left:212px;top:169px" width="6" height="6"><path d="M0.3 0.3L5.3 5.3M5.3 0.3L0.3 5.3" stroke="#111" stroke-width="1.2"/></svg><div class="a" style="left:132px;top:192.3px;width:86px;height:2px;background:#b2b2b2"></div><div class="a" style="left:226px;top:167px;width:27px;height:28px;background:#dfdfdf;border-radius:3px;box-shadow:0 0 0 .5px #9a9a9a"></div><svg style="left:232px;top:173px" width="15" height="15"><path d="M7.5 0V15M0 7.5H15" stroke="#111" stroke-width="1.3"/></svg><div class="a" style="left:654px;top:165px;width:30px;height:28.5px;background:#dcdcdc;border-radius:3px"></div><svg style="left:663px;top:174px" width="12" height="12"><path d="M0.5 0.5L11.5 11.5M11.5 0.5L0.5 11.5" stroke="#222" stroke-width="1.4"/></svg><div class="a" style="left:31px;top:318px;width:653px;height:13px;background-color:#c6c6c6;background-image:linear-gradient(45deg,#b4b4b4 25%,transparent 25%,transparent 75%,#b4b4b4 75%),linear-gradient(45deg,#b4b4b4 25%,transparent 25%,transparent 75%,#b4b4b4 75%);background-size:4px 4px;background-position:0 0,2px 2px"></div><div class="a" style="left:353px;top:198px;width:11px;height:251px;background-color:#c6c6c6;background-image:linear-gradient(45deg,#b4b4b4 25%,transparent 25%,transparent 75%,#b4b4b4 75%),linear-gradient(45deg,#b4b4b4 25%,transparent 25%,transparent 75%,#b4b4b4 75%);background-size:4px 4px;background-position:0 0,2px 2px"></div><svg style="left:0;top:0" width="0" height="0"><defs>
<filter id="gtex" x="0" y="0" width="100%" height="100%"><feTurbulence type="fractalNoise" baseFrequency="0.14" numOctaves="3" seed="4" result="n"/><feColorMatrix in="n" type="matrix" values="0 0 0 0 0  0 0 0 0 0  0 0 0 0 0  0.55 0.55 0 0 -0.25" result="m"/><feComposite in="SourceGraphic" in2="m" operator="in"/></filter>
<filter id="wtex" x="0" y="0" width="100%" height="100%"><feTurbulence type="fractalNoise" baseFrequency="0.16" numOctaves="4" seed="9" result="n"/><feColorMatrix in="n" type="matrix" values="0 0 0 0 0  0 0 0 0 0  0 0 0 0 0  0.6 0.6 0 0 -0.36" result="m"/><feComposite in="SourceGraphic" in2="m" operator="in"/></filter>
</defs></svg><div class="a" style="left:31px;top:198px;width:324px;height:122px;background:#fff;box-sizing:border-box;border-top:1px solid #b4b4b4;border-left:1px solid #b4b4b4;"></div><div class="doc" style="left:34px;top:201px;width:318px;height:116px;background:linear-gradient(90deg,#858585 0,#686868 1.5px,#686868 4px,#7a7a7a 5px)"><div class="a" style="left:5px;top:0px;width:1px;height:1px"><div class="a" style="left:0;top:-10px;width:700px;height:400px;background:#fff"></div><div class="a" style="left:169px;top:4px;width:28px;height:12.5px;background:#f4f000;border-radius:6px;filter:blur(1.1px)"></div><div class="dt" style="left:73px;top:-4.4px;font-size:10.8px;line-height:11px;color:#0c0c0c;-webkit-text-stroke:.35px #0c0c0c;word-spacing:2px">repudiandae sint et molestiae non recusandae. Itaque earum rerum hic tenetur a sapiente</div><div class="dt" style="left:73px;top:6.8px;font-size:10.8px;line-height:11px;color:#0c0c0c;-webkit-text-stroke:.35px #0c0c0c;word-spacing:1.66px">delectus, ut aut reiciendis voluptatibus maiores alias consequatur aut perferendis doloribus</div><div class="dt" style="left:73px;top:17.5px;font-size:10.8px;line-height:11px;color:#0c0c0c;-webkit-text-stroke:.35px #0c0c0c">asperiores repellat.</div><svg style="left:0;top:43px" width="700" height="300" viewBox="0 0 700 300"><defs><linearGradient id="gga" x1="0" y1="0" x2="1" y2="0"><stop offset="0" stop-color="#1d600f"/><stop offset=".5" stop-color="#267a14"/><stop offset="1" stop-color="#2f901a"/></linearGradient><linearGradient id="vta" x1="0" y1="0" x2="0" y2="1"><stop offset="0" stop-color="#000" stop-opacity=".28"/><stop offset="1" stop-color="#000" stop-opacity="0"/></linearGradient><linearGradient id="wga" x1="0" y1="0" x2="1" y2="0"><stop offset="0" stop-color="#e3e3e3"/><stop offset=".2" stop-color="#d9d9d9"/><stop offset="1" stop-color="#d2d2d2"/></linearGradient></defs>
<rect x="0" y="0" width="199.3" height="300" fill="url(#gga)"/>
<rect x="0" y="0" width="199.3" height="300" fill="#0c2a06" filter="url(#gtex)"/>
<rect x="199.3" y="0" width="502" height="300" fill="url(#wga)"/>
<rect x="199.3" y="0" width="502" height="300" fill="#fff" filter="url(#wtex)"/>
<rect x="0" y="0" width="199.3" height="45" fill="url(#vta)"/><rect x="199.3" y="0" width="502" height="30" fill="url(#vta)" opacity=".35"/>
</svg><div class="dt" style="left:73px;top:66.6px;font-size:10.3px;line-height:12px;color:#050505;-webkit-text-stroke:.15px #050505;word-spacing:2.43px">Lorem ipsum dolor sit amet, consectetur adipiscing elit, sed do eiusmod tempor incididunt ut</div><div class="dt" style="left:73px;top:78.8px;font-size:10.3px;line-height:12px;color:#050505;-webkit-text-stroke:.15px #050505;word-spacing:0px">labore et dolore magna aliqua. Ut enim ad minim veniam, quis nostrud exercitation ullamco laboris</div><div class="dt" style="left:73px;top:90.7px;font-size:10.3px;line-height:12px;color:#050505;-webkit-text-stroke:.15px #050505;word-spacing:0.77px">nisi ut aliquip ex ea commodo consequat. Duis aute irure dolor in reprehenderit in voluptate velit</div><div class="dt" style="left:73px;top:102.9px;font-size:10.3px;line-height:12px;color:#050505;-webkit-text-stroke:.15px #050505;word-spacing:0.67px">esse cillum dolore eu fugiat nulla pariatur. Excepteur sint occaecat cupidatat non proident, sunt in</div><div class="dt" style="left:73px;top:115.1px;font-size:10.3px;line-height:12px;color:#050505;-webkit-text-stroke:.15px #050505;word-spacing:1.2px">culpa qui officia deserunt mollit anim id est laborum.</div></div><div class="a" style="left:313px;top:0;width:5px;height:116px;background:linear-gradient(90deg,rgba(0,0,0,0),rgba(0,0,0,.22))"></div><div class="a" style="left:0;top:113px;width:318px;height:3px;background:linear-gradient(rgba(0,0,0,0),rgba(0,0,0,.18))"></div><div class="a" style="left:0;top:0;width:318px;height:3.5px;background:linear-gradient(rgba(40,40,40,.85),rgba(60,60,60,0))"></div></div><div class="a" style="left:362px;top:198px;width:323px;height:122px;background:#fff;box-sizing:border-box;border-top:1px solid #b4b4b4;border-left:1px solid #b4b4b4;"></div><div class="doc" style="left:365px;top:201px;width:302px;height:116px;background:linear-gradient(90deg,#858585 0,#686868 1.5px,#686868 4px,#7a7a7a 5px)"><div class="a" style="left:5px;top:0px;width:1px;height:1px"><div class="a" style="left:0;top:-10px;width:700px;height:400px;background:#fff"></div><div class="a" style="left:169px;top:4px;width:28px;height:12.5px;background:#f4f000;border-radius:6px;filter:blur(1.1px)"></div><div class="dt" style="left:73px;top:-4.4px;font-size:10.8px;line-height:11px;color:#0c0c0c;-webkit-text-stroke:.35px #0c0c0c;word-spacing:2px">repudiandae sint et molestiae non recusandae. Itaque earum rerum hic tenetur a sapiente</div><div class="dt" style="left:73px;top:6.8px;font-size:10.8px;line-height:11px;color:#0c0c0c;-webkit-text-stroke:.35px #0c0c0c;word-spacing:1.66px">delectus, ut aut reiciendis voluptatibus maiores alias consequatur aut perferendis doloribus</div><div class="dt" style="left:73px;top:17.5px;font-size:10.8px;line-height:11px;color:#0c0c0c;-webkit-text-stroke:.35px #0c0c0c">asperiores repellat.</div><svg style="left:0;top:43px" width="700" height="300" viewBox="0 0 700 300"><defs><linearGradient id="ggb" x1="0" y1="0" x2="1" y2="0"><stop offset="0" stop-color="#1d600f"/><stop offset=".5" stop-color="#267a14"/><stop offset="1" stop-color="#2f901a"/></linearGradient><linearGradient id="vtb" x1="0" y1="0" x2="0" y2="1"><stop offset="0" stop-color="#000" stop-opacity=".28"/><stop offset="1" stop-color="#000" stop-opacity="0"/></linearGradient><linearGradient id="wgb" x1="0" y1="0" x2="1" y2="0"><stop offset="0" stop-color="#e3e3e3"/><stop offset=".2" stop-color="#d9d9d9"/><stop offset="1" stop-color="#d2d2d2"/></linearGradient></defs>
<rect x="0" y="0" width="199.3" height="300" fill="url(#ggb)"/>
<rect x="0" y="0" width="199.3" height="300" fill="#0c2a06" filter="url(#gtex)"/>
<rect x="199.3" y="0" width="502" height="300" fill="url(#wgb)"/>
<rect x="199.3" y="0" width="502" height="300" fill="#fff" filter="url(#wtex)"/>
<rect x="0" y="0" width="199.3" height="45" fill="url(#vtb)"/><rect x="199.3" y="0" width="502" height="30" fill="url(#vtb)" opacity=".35"/>
</svg><div class="dt" style="left:73px;top:66.6px;font-size:10.3px;line-height:12px;color:#050505;-webkit-text-stroke:.15px #050505;word-spacing:2.43px">Lorem ipsum dolor sit amet, consectetur adipiscing elit, sed do eiusmod tempor incididunt ut</div><div class="dt" style="left:73px;top:78.8px;font-size:10.3px;line-height:12px;color:#050505;-webkit-text-stroke:.15px #050505;word-spacing:0px">labore et dolore magna aliqua. Ut enim ad minim veniam, quis nostrud exercitation ullamco laboris</div><div class="dt" style="left:73px;top:90.7px;font-size:10.3px;line-height:12px;color:#050505;-webkit-text-stroke:.15px #050505;word-spacing:0.77px">nisi ut aliquip ex ea commodo consequat. Duis aute irure dolor in reprehenderit in voluptate velit</div><div class="dt" style="left:73px;top:102.9px;font-size:10.3px;line-height:12px;color:#050505;-webkit-text-stroke:.15px #050505;word-spacing:0.67px">esse cillum dolore eu fugiat nulla pariatur. Excepteur sint occaecat cupidatat non proident, sunt in</div><div class="dt" style="left:73px;top:115.1px;font-size:10.3px;line-height:12px;color:#050505;-webkit-text-stroke:.15px #050505;word-spacing:1.2px">culpa qui officia deserunt mollit anim id est laborum.</div></div><div class="a" style="left:297px;top:0;width:5px;height:116px;background:linear-gradient(90deg,rgba(0,0,0,0),rgba(0,0,0,.22))"></div><div class="a" style="left:0;top:113px;width:302px;height:3px;background:linear-gradient(rgba(0,0,0,0),rgba(0,0,0,.18))"></div><div class="a" style="left:0;top:0;width:302px;height:3.5px;background:linear-gradient(rgba(40,40,40,.85),rgba(60,60,60,0))"></div></div><div class="a" style="left:31px;top:329px;width:324px;height:121px;background:#fff;box-sizing:border-box;border-top:1px solid #b4b4b4;border-left:1px solid #b4b4b4;border-bottom:1px solid #b4b4b4;border-radius:0 0 0 3px"></div><div class="doc" style="left:34px;top:332px;width:318px;height:100px;background:linear-gradient(90deg,#858585 0,#686868 1.5px,#686868 4px,#7a7a7a 5px)"><div class="a" style="left:5px;top:-1px;width:1px;height:1px"><div class="a" style="left:0;top:-10px;width:700px;height:400px;background:#fff"></div><div class="a" style="left:169px;top:4px;width:28px;height:12.5px;background:#f4f000;border-radius:6px;filter:blur(1.1px)"></div><div class="dt" style="left:73px;top:-4.4px;font-size:10.8px;line-height:11px;color:#0c0c0c;-webkit-text-stroke:.35px #0c0c0c;word-spacing:2px">repudiandae sint et molestiae non recusandae. Itaque earum rerum hic tenetur a sapiente</div><div class="dt" style="left:73px;top:6.8px;font-size:10.8px;line-height:11px;color:#0c0c0c;-webkit-text-stroke:.35px #0c0c0c;word-spacing:1.66px">delectus, ut aut reiciendis voluptatibus maiores alias consequatur aut perferendis doloribus</div><div class="dt" style="left:73px;top:17.5px;font-size:10.8px;line-height:11px;color:#0c0c0c;-webkit-text-stroke:.35px #0c0c0c">asperiores repellat.</div><svg style="left:0;top:43px" width="700" height="300" viewBox="0 0 700 300"><defs><linearGradient id="ggc" x1="0" y1="0" x2="1" y2="0"><stop offset="0" stop-color="#1d600f"/><stop offset=".5" stop-color="#267a14"/><stop offset="1" stop-color="#2f901a"/></linearGradient><linearGradient id="vtc" x1="0" y1="0" x2="0" y2="1"><stop offset="0" stop-color="#000" stop-opacity=".28"/><stop offset="1" stop-color="#000" stop-opacity="0"/></linearGradient><linearGradient id="wgc" x1="0" y1="0" x2="1" y2="0"><stop offset="0" stop-color="#e3e3e3"/><stop offset=".2" stop-color="#d9d9d9"/><stop offset="1" stop-color="#d2d2d2"/></linearGradient></defs>
<rect x="0" y="0" width="199.3" height="300" fill="url(#ggc)"/>
<rect x="0" y="0" width="199.3" height="300" fill="#0c2a06" filter="url(#gtex)"/>
<rect x="199.3" y="0" width="502" height="300" fill="url(#wgc)"/>
<rect x="199.3" y="0" width="502" height="300" fill="#fff" filter="url(#wtex)"/>
<rect x="0" y="0" width="199.3" height="45" fill="url(#vtc)"/><rect x="199.3" y="0" width="502" height="30" fill="url(#vtc)" opacity=".35"/>
</svg><div class="dt" style="left:73px;top:66.6px;font-size:10.3px;line-height:12px;color:#050505;-webkit-text-stroke:.15px #050505;word-spacing:2.43px">Lorem ipsum dolor sit amet, consectetur adipiscing elit, sed do eiusmod tempor incididunt ut</div><div class="dt" style="left:73px;top:78.8px;font-size:10.3px;line-height:12px;color:#050505;-webkit-text-stroke:.15px #050505;word-spacing:0px">labore et dolore magna aliqua. Ut enim ad minim veniam, quis nostrud exercitation ullamco laboris</div><div class="dt" style="left:73px;top:90.7px;font-size:10.3px;line-height:12px;color:#050505;-webkit-text-stroke:.15px #050505;word-spacing:0.77px">nisi ut aliquip ex ea commodo consequat. Duis aute irure dolor in reprehenderit in voluptate velit</div><div class="dt" style="left:73px;top:102.9px;font-size:10.3px;line-height:12px;color:#050505;-webkit-text-stroke:.15px #050505;word-spacing:0.67px">esse cillum dolore eu fugiat nulla pariatur. Excepteur sint occaecat cupidatat non proident, sunt in</div><div class="dt" style="left:73px;top:115.1px;font-size:10.3px;line-height:12px;color:#050505;-webkit-text-stroke:.15px #050505;word-spacing:1.2px">culpa qui officia deserunt mollit anim id est laborum.</div></div><div class="a" style="left:313px;top:0;width:5px;height:100px;background:linear-gradient(90deg,rgba(0,0,0,0),rgba(0,0,0,.22))"></div><div class="a" style="left:0;top:97px;width:318px;height:3px;background:linear-gradient(rgba(0,0,0,0),rgba(0,0,0,.18))"></div><div class="a" style="left:0;top:0;width:318px;height:3.5px;background:linear-gradient(rgba(40,40,40,.85),rgba(60,60,60,0))"></div></div><div class="a" style="left:362px;top:329px;width:323px;height:121px;background:#fff;box-sizing:border-box;border-top:1px solid #b4b4b4;border-left:1px solid #b4b4b4;border-bottom:1px solid #b4b4b4"></div><div class="doc" style="left:365px;top:332px;width:302px;height:100px;background:linear-gradient(90deg,#858585 0,#686868 1.5px,#686868 4px,#7a7a7a 5px)"><div class="a" style="left:5px;top:-1px;width:1px;height:1px"><div class="a" style="left:0;top:-10px;width:700px;height:400px;background:#fff"></div><div class="a" style="left:169px;top:4px;width:28px;height:12.5px;background:#f4f000;border-radius:6px;filter:blur(1.1px)"></div><div class="dt" style="left:73px;top:-4.4px;font-size:10.8px;line-height:11px;color:#0c0c0c;-webkit-text-stroke:.35px #0c0c0c;word-spacing:2px">repudiandae sint et molestiae non recusandae. Itaque earum rerum hic tenetur a sapiente</div><div class="dt" style="left:73px;top:6.8px;font-size:10.8px;line-height:11px;color:#0c0c0c;-webkit-text-stroke:.35px #0c0c0c;word-spacing:1.66px">delectus, ut aut reiciendis voluptatibus maiores alias consequatur aut perferendis doloribus</div><div class="dt" style="left:73px;top:17.5px;font-size:10.8px;line-height:11px;color:#0c0c0c;-webkit-text-stroke:.35px #0c0c0c">asperiores repellat.</div><svg style="left:0;top:43px" width="700" height="300" viewBox="0 0 700 300"><defs><linearGradient id="ggd" x1="0" y1="0" x2="1" y2="0"><stop offset="0" stop-color="#1d600f"/><stop offset=".5" stop-color="#267a14"/><stop offset="1" stop-color="#2f901a"/></linearGradient><linearGradient id="vtd" x1="0" y1="0" x2="0" y2="1"><stop offset="0" stop-color="#000" stop-opacity=".28"/><stop offset="1" stop-color="#000" stop-opacity="0"/></linearGradient><linearGradient id="wgd" x1="0" y1="0" x2="1" y2="0"><stop offset="0" stop-color="#e3e3e3"/><stop offset=".2" stop-color="#d9d9d9"/><stop offset="1" stop-color="#d2d2d2"/></linearGradient></defs>
<rect x="0" y="0" width="199.3" height="300" fill="url(#ggd)"/>
<rect x="0" y="0" width="199.3" height="300" fill="#0c2a06" filter="url(#gtex)"/>
<rect x="199.3" y="0" width="502" height="300" fill="url(#wgd)"/>
<rect x="199.3" y="0" width="502" height="300" fill="#fff" filter="url(#wtex)"/>
<rect x="0" y="0" width="199.3" height="45" fill="url(#vtd)"/><rect x="199.3" y="0" width="502" height="30" fill="url(#vtd)" opacity=".35"/>
</svg><div class="dt" style="left:73px;top:66.6px;font-size:10.3px;line-height:12px;color:#050505;-webkit-text-stroke:.15px #050505;word-spacing:2.43px">Lorem ipsum dolor sit amet, consectetur adipiscing elit, sed do eiusmod tempor incididunt ut</div><div class="dt" style="left:73px;top:78.8px;font-size:10.3px;line-height:12px;color:#050505;-webkit-text-stroke:.15px #050505;word-spacing:0px">labore et dolore magna aliqua. Ut enim ad minim veniam, quis nostrud exercitation ullamco laboris</div><div class="dt" style="left:73px;top:90.7px;font-size:10.3px;line-height:12px;color:#050505;-webkit-text-stroke:.15px #050505;word-spacing:0.77px">nisi ut aliquip ex ea commodo consequat. Duis aute irure dolor in reprehenderit in voluptate velit</div><div class="dt" style="left:73px;top:102.9px;font-size:10.3px;line-height:12px;color:#050505;-webkit-text-stroke:.15px #050505;word-spacing:0.67px">esse cillum dolore eu fugiat nulla pariatur. Excepteur sint occaecat cupidatat non proident, sunt in</div><div class="dt" style="left:73px;top:115.1px;font-size:10.3px;line-height:12px;color:#050505;-webkit-text-stroke:.15px #050505;word-spacing:1.2px">culpa qui officia deserunt mollit anim id est laborum.</div></div><div class="a" style="left:297px;top:0;width:5px;height:100px;background:linear-gradient(90deg,rgba(0,0,0,0),rgba(0,0,0,.22))"></div><div class="a" style="left:0;top:97px;width:302px;height:3px;background:linear-gradient(rgba(0,0,0,0),rgba(0,0,0,.18))"></div><div class="a" style="left:0;top:0;width:302px;height:3.5px;background:linear-gradient(rgba(40,40,40,.85),rgba(60,60,60,0))"></div></div><div class="a" style="left:667px;top:201px;width:17px;height:116px;background:#f0f0f0"></div><svg style="left:671.5px;top:207px" width="8" height="5"><polyline points="0.5,4.2 4,0.8 7.5,4.2" fill="none" stroke="#222" stroke-width="1.5"/></svg><svg style="left:671.5px;top:307px" width="8" height="5"><polyline points="0.5,0.8 4,4.2 7.5,0.8" fill="none" stroke="#222" stroke-width="1.5"/></svg><div class="a" style="left:672.5px;top:220px;width:5.5px;height:16px;border-radius:3px;background:#6b6b6b"></div><div class="a" style="left:667px;top:332px;width:17px;height:100px;background:#f0f0f0"></div><svg style="left:671.5px;top:338px" width="8" height="5"><polyline points="0.5,4.2 4,0.8 7.5,4.2" fill="none" stroke="#222" stroke-width="1.5"/></svg><svg style="left:671.5px;top:422px" width="8" height="5"><polyline points="0.5,0.8 4,4.2 7.5,0.8" fill="none" stroke="#222" stroke-width="1.5"/></svg><div class="a" style="left:672.5px;top:349px;width:5.5px;height:16px;border-radius:3px;background:#6b6b6b"></div><div class="a" style="left:34px;top:432px;width:318px;height:16px;background:#f0f0f0"></div><svg style="left:40px;top:435.5px" width="5" height="8"><polyline points="4.2,0.5 0.8,4 4.2,7.5" fill="none" stroke="#222" stroke-width="1.5"/></svg><svg style="left:342px;top:435.5px" width="5" height="8"><polyline points="0.8,0.5 4.2,4 0.8,7.5" fill="none" stroke="#222" stroke-width="1.5"/></svg><div class="a" style="left:49px;top:437px;width:151px;height:5.5px;border-radius:3px;background:#6b6b6b"></div><div class="a" style="left:365px;top:432px;width:302px;height:16px;background:#f0f0f0"></div><svg style="left:371px;top:435.5px" width="5" height="8"><polyline points="4.2,0.5 0.8,4 4.2,7.5" fill="none" stroke="#222" stroke-width="1.5"/></svg><svg style="left:657px;top:435.5px" width="5" height="8"><polyline points="0.8,0.5 4.2,4 0.8,7.5" fill="none" stroke="#222" stroke-width="1.5"/></svg><div class="a" style="left:380px;top:437px;width:136px;height:5.5px;border-radius:3px;background:#6b6b6b"></div><div class="a" style="left:667px;top:432px;width:17px;height:16px;background:#f0f0f0"></div><div class="a" style="left:353.7px;top:292.5px;width:10px;height:63px;background:#e4e4e4;border:1.5px solid #fff;border-radius:5px;box-sizing:border-box"></div><div class="a" style="left:326.5px;top:320px;width:63px;height:9.5px;background:#e4e4e4;border:1.5px solid #fff;border-radius:5px;box-sizing:border-box"></div><div class="a" style="left:355.2px;top:321.5px;width:7px;height:6.5px;background:#e4e4e4"></div><svg style="left:0;top:0" width="685" height="481"><g fill="none" stroke="#222" stroke-width="1.2"><polyline points="356.3,315.5 358.5,313.3 360.7,315.5"/><polyline points="356.3,333.3 358.5,335.5 360.7,333.3"/><polyline points="350.2,322.4 348,324.6 350.2,326.8"/><polyline points="366.8,322.4 369,324.6 366.8,326.8"/></g></svg><div class="a" style="left:1px;top:198px;width:30px;height:11px;background:#f1f1f1"></div><svg style="left:22px;top:199.5px" width="8" height="8"><path d="M0.8 0.3V7.7M7 0.6L3.4 4L7 7.4" fill="none" stroke="#111" stroke-width="1.2"/></svg><div class="a" style="left:3px;top:211px;width:26px;height:10px;background-image:radial-gradient(circle at 0.5px 0.5px,#bdbdbd 0.55px,transparent 0.8px);background-size:2px 2px"></div><svg style="left:0;top:0" width="40" height="481" viewBox="0 0 40 481"><path d="M8.5 225.5H20.5Q22 225.5 22 227V232H19.5V245L14 240.3L8.5 245Z" fill="#42a0f0"/><path d="M8.5 225.5H19.5V228L8.5 239.5Z" fill="#6db8f6"/><path d="M19.5 225.5H20.5Q22 225.5 22 227V232H19.5Z" fill="#2f86d6"/><path d="M5.5 268V253.5Q5.5 252.5 6.5 252.5H15.5M9 271V257Q9 256 10 256H18.5" fill="none" stroke="#8a8a8a" stroke-width="1"/><path d="M12.5 260.5Q12.5 259.5 13.5 259.5H21L25.5 264V273Q25.5 274 24.5 274H13.5Q12.5 274 12.5 273Z" fill="#fff" stroke="#5a5a5a" stroke-width="1.1"/><path d="M21 259.5L25.5 264H21Z" fill="#5a5a5a"/><path d="M15 265h6M15 267.5h8M15 270h8" stroke="#8a8a8a" stroke-width="1"/><path d="M6.5 280.5H24.5Q26 280.5 26 282V294.5Q26 296 24.5 296H14L9.5 302V296H6.5Q5 296 5 294.5V282Q5 280.5 6.5 280.5Z" fill="#fdd251"/><path d="M8 285h15M8 288.2h15M8 291.4h15" stroke="#f0a93a" stroke-width="1.3"/><circle cx="27" cy="303" r="1.8" fill="#6aa82e"/><circle cx="27" cy="331" r="1.8" fill="#6aa82e"/><path d="M9.5 324L20.5 313.5Q23.5 311 25.3 313.2Q26.8 315.5 24.2 318L12 328.5Q8 331.5 5.5 328.6Q3.3 325.5 7 322L18 312" fill="none" stroke="#9a9a9a" stroke-width="1.5" stroke-linecap="round"/><path d="M7.5 336.5H18L22.5 341.0V356.5Q22.5 357.5 21.5 357.5H7.5Q6.5 357.5 6.5 356.5V337.5Q6.5 336.5 7.5 336.5Z" fill="#fff" stroke="#5a5a5a" stroke-width="1.1"/><path d="M18 336.5L22.5 341.0H18Z" fill="#5a5a5a"/><rect x="9" y="340.5" width="2.5" height="2.5" fill="#3d9bee"/><rect x="9" y="345" width="2.5" height="2.5" fill="#3d9bee"/><path d="M13 341.7h5M13 346.2h7" stroke="#8a8a8a" stroke-width="1"/><rect x="9.5" y="350.5" width="10" height="3.5" fill="#fff" stroke="#3d9bee" stroke-width="1"/><path d="M7.5 364.5H18L22.5 369.0V384.5Q22.5 385.5 21.5 385.5H7.5Q6.5 385.5 6.5 384.5V365.5Q6.5 364.5 7.5 364.5Z" fill="#fff" stroke="#5a5a5a" stroke-width="1.1"/><path d="M18 364.5L22.5 369.0H18Z" fill="#5a5a5a"/><circle cx="12" cy="373" r="2.8" fill="#e8553a"/><circle cx="12" cy="373" r="1.2" fill="#f7b8a8"/><path d="M10.5 375.5L9.8 380L12 378.5L14.2 380L13.5 375.5Z" fill="#e8553a"/><path d="M16.5 372h4M16.5 375h4M16.5 378h3" stroke="#8a8a8a" stroke-width="1"/><path d="M15.5 400.5L27 405.8L15.5 411.5L4 405.8Z" fill="#2f86d6"/><path d="M15.5 396.5L27 401.8L15.5 407.5L4 401.8Z" fill="#3d9bee"/><path d="M15.5 392.2L27 397.5L15.5 403.2L4 397.5Z" fill="#4da8f5"/><path d="M7.5 420.5H18L22.5 425.0V440.5Q22.5 441.5 21.5 441.5H7.5Q6.5 441.5 6.5 440.5V421.5Q6.5 420.5 7.5 420.5Z" fill="#fff" stroke="#5a5a5a" stroke-width="1.1"/><path d="M18 420.5L22.5 425.0H18Z" fill="#5a5a5a"/><path d="M12 424l4.5 6.5H8.5Z" fill="#6aa82e"/><rect x="12.5" y="422.5" width="4.5" height="4" fill="#3d9bee"/><circle cx="10.5" cy="428.5" r="2.6" fill="#f5c63c"/><path d="M15.5 434h5M15.5 436.5h5M15.5 439h5" stroke="#8a8a8a" stroke-width="1"/></svg><div class="t" style="left:8.5px;top:431px;font-family:'Liberation Serif',serif;font-weight:bold;font-size:9px;line-height:10px;color:#444">T</div><svg style="left:12px;top:447px" width="7" height="9"><polyline points="0,0 3.5,3 7,0" fill="none" stroke="#111" stroke-width="1.7"/><polyline points="0,4.5 3.5,7.5 7,4.5" fill="none" stroke="#111" stroke-width="1.7"/></svg>
<!-- BOTTOM TOOLBAR -->
<div class="a" style="left:0;top:480px;width:685px;height:1px;background:#6b6b6b"></div><div class="a" style="left:33px;top:454px;width:10px;height:16px;background-image:radial-gradient(circle at 0.5px 0.5px,#a8a8a8 0.55px,transparent 0.8px);background-size:2px 2px"></div><svg style="left:34px;top:471px" width="7" height="8"><path d="M0.7 0.3V7.7M6.5 0.6L3.1 4L6.5 7.4" fill="none" stroke="#111" stroke-width="1.15"/></svg><svg style="left:0;top:0" width="685" height="481"><circle cx="52.5" cy="461.2" r="3.9" fill="none" stroke="#7d7d7d" stroke-width="2.6"/><path d="M56.70 461.20L59.99 461.20M55.47 464.17L57.79 466.49M52.50 465.40L52.50 468.69M49.53 464.17L47.21 466.49M48.30 461.20L45.01 461.20M49.53 458.23L47.21 455.91M52.50 457.00L52.50 453.71M55.47 458.23L57.79 455.91" stroke="#7d7d7d" stroke-width="2.60"/><circle cx="61.6" cy="470.5" r="3.3" fill="none" stroke="#f7a93b" stroke-width="2.5"/><path d="M65.20 470.50L68.35 470.50M64.15 473.05L66.37 475.27M61.60 474.10L61.60 477.25M59.05 473.05L56.83 475.27M58.00 470.50L54.85 470.50M59.05 467.95L56.83 465.73M61.60 466.90L61.60 463.75M64.15 467.95L66.37 465.73" stroke="#f7a93b" stroke-width="2.50"/></svg><svg style="left:74.3px;top:463px" width="6.4" height="4.6"><polyline points="0,0 3.2,3.6 6.4,0" fill="none" stroke="#111" stroke-width="1.9"/></svg><div class="vs" style="left:84.5px;top:452px;height:27px;background:#c4c4c4"></div><svg style="left:90.5px;top:461px" width="7" height="9"><polyline points="0,0 3.5,3 7,0" fill="none" stroke="#111" stroke-width="1.7"/><polyline points="0,4.5 3.5,7.5 7,4.5" fill="none" stroke="#111" stroke-width="1.7"/></svg><div class="a" style="left:133px;top:454px;width:10px;height:16px;background-image:radial-gradient(circle at 0.5px 0.5px,#a8a8a8 0.55px,transparent 0.8px);background-size:2px 2px"></div><svg style="left:134px;top:471px" width="7" height="8"><path d="M0.7 0.3V7.7M6.5 0.6L3.1 4L6.5 7.4" fill="none" stroke="#111" stroke-width="1.15"/></svg><div class="tan" style="left:404px;top:452px;width:27px;height:27px"></div><svg style="left:0;top:0" width="685" height="481"><circle cx="157" cy="465.5" r="10.8" fill="#fff" stroke="#bdbdbd" stroke-width="1"/><path d="M153.3 461V470M160.8 460.8L155.3 465.5L160.8 470.2" fill="none" stroke="#8ec6f5" stroke-width="1.8"/><circle cx="185" cy="465.5" r="10.8" fill="#fff" stroke="#bdbdbd" stroke-width="1"/><path d="M187.3 460.8L181.8 465.5L187.3 470.2" fill="none" stroke="#8ec6f5" stroke-width="1.8"/><circle cx="305" cy="465.5" r="10.8" fill="#fff" stroke="#9a9a9a" stroke-width="1"/><path d="M302.8 460.8L308.3 465.5L302.8 470.2" fill="none" stroke="#2f93ea" stroke-width="1.9"/><circle cx="332.5" cy="465.5" r="10.8" fill="#fff" stroke="#9a9a9a" stroke-width="1"/><path d="M336.3 461V470M328.8 460.8L334.3 465.5L328.8 470.2" fill="none" stroke="#2f93ea" stroke-width="1.9"/><circle cx="365" cy="465.5" r="10.8" fill="#fff" stroke="#9a9a9a" stroke-width="1"/><path d="M359.5 465.5H371M364.3 460.5L359.3 465.5L364.3 470.5" fill="none" stroke="#6aa82e" stroke-width="1.9"/><defs><linearGradient id="mg" x1="0" y1="0" x2="1" y2="1"><stop offset=".5" stop-color="#fff"/><stop offset="1" stop-color="#dcdcdc"/></linearGradient></defs><circle cx="612.7" cy="465.7" r="10.6" fill="url(#mg)" stroke="#8a8a8a" stroke-width="1"/><path d="M607 465.7H618.5" stroke="#4da3f5" stroke-width="1.9"/><path d="M410.5 455.5 L420.5 455.5 L425.5 460.5 L425.5 475.5 L410.5 475.5 Z" fill="#f6ecd2" stroke="#8a8a8a" stroke-width="1" stroke-linejoin="round"/><path d="M420.5 455.5 L425.5 462.0 L419.5 460.0 Z" fill="#7a7a7a"/><rect x="437.5" y="455.5" width="15" height="8.5" fill="none" stroke="#c9c9c9" stroke-width="1"/><path d="M437.5 475.5 L437.5 466.5 L447.5 466.5 L452.5 471.5 L452.5 475.5" fill="none" stroke="#c9c9c9" stroke-width="1"/><path d="M447.5 466.5 L452.8 472.3 L447.0 470.5 Z" fill="#a8a8a8"/><path d="M461.5 458.5 L467.5 458.5 L471.5 462.5 L471.5 472.5 L461.5 472.5 Z" fill="#fff" stroke="#c4c4c4" stroke-width="1" stroke-linejoin="round"/><path d="M467.5 458.5 L471.5 464.0 L466.5 462.0 Z" fill="#a8a8a8"/><path d="M474.5 458.5 L480.5 458.5 L484.5 462.5 L484.5 472.5 L474.5 472.5 Z" fill="#fff" stroke="#c4c4c4" stroke-width="1" stroke-linejoin="round"/><path d="M480.5 458.5 L484.5 464.0 L479.5 462.0 Z" fill="#a8a8a8"/></svg><div class="a" style="left:200px;top:454.5px;width:90px;height:22px;box-sizing:border-box;background:#fff;border:1px solid #9a9a9a;border-radius:3px"></div><div class="a" style="left:257.5px;top:459px;width:5px;height:13px;background:#fff6c8;filter:blur(1px)"></div><div class="t" style="left:259px;top:458px;font-size:12px;color:#222">i</div><div class="t" style="left:263.5px;top:457px;font-size:14px;line-height:16px;color:#333">/</div><div class="t" style="left:270px;top:456px;font-size:10.5px;line-height:12px;color:#959595;letter-spacing:.8px">1:8</div><div class="vs" style="left:349px;top:452px;height:27px;background:#cfcfcf"></div><svg style="left:383px;top:461px" width="7" height="9"><polyline points="0,0 3.5,3 7,0" fill="none" stroke="#111" stroke-width="1.7"/><polyline points="0,4.5 3.5,7.5 7,4.5" fill="none" stroke="#111" stroke-width="1.7"/></svg><div class="a" style="left:394px;top:454px;width:10px;height:16px;background-image:radial-gradient(circle at 0.5px 0.5px,#a8a8a8 0.55px,transparent 0.8px);background-size:2px 2px"></div><svg style="left:395px;top:471px" width="7" height="8"><path d="M0.7 0.3V7.7M6.5 0.6L3.1 4L6.5 7.4" fill="none" stroke="#111" stroke-width="1.15"/></svg><svg style="left:491px;top:461px" width="7" height="9"><polyline points="0,0 3.5,3 7,0" fill="none" stroke="#111" stroke-width="1.7"/><polyline points="0,4.5 3.5,7.5 7,4.5" fill="none" stroke="#111" stroke-width="1.7"/></svg><div class="a" style="left:502px;top:454px;width:10px;height:16px;background-image:radial-gradient(circle at 0.5px 0.5px,#a8a8a8 0.55px,transparent 0.8px);background-size:2px 2px"></div><svg style="left:503px;top:471px" width="7" height="8"><path d="M0.7 0.3V7.7M6.5 0.6L3.1 4L6.5 7.4" fill="none" stroke="#111" stroke-width="1.15"/></svg><div class="a" style="left:512.5px;top:454.5px;width:81px;height:22px;box-sizing:border-box;background:#fff;border:1px solid #9a9a9a;border-radius:3px"></div><div class="t" style="left:516px;top:458px;font-size:13px;line-height:15px">75%</div><svg style="left:581.8px;top:463.5px" width="6.4" height="4.6"><polyline points="0,0 3.2,3.6 6.4,0" fill="none" stroke="#111" stroke-width="1.9"/></svg><div class="vs" style="left:596px;top:452px;height:27px;background:#cfcfcf"></div><svg style="left:630px;top:461px" width="7" height="9"><polyline points="0,0 3.5,3 7,0" fill="none" stroke="#111" stroke-width="1.7"/><polyline points="0,4.5 3.5,7.5 7,4.5" fill="none" stroke="#111" stroke-width="1.7"/></svg><div class="a" style="left:641px;top:454px;width:10px;height:16px;background-image:radial-gradient(circle at 0.5px 0.5px,#a8a8a8 0.55px,transparent 0.8px);background-size:2px 2px"></div><svg style="left:642px;top:471px" width="7" height="8"><path d="M0.7 0.3V7.7M6.5 0.6L3.1 4L6.5 7.4" fill="none" stroke="#111" stroke-width="1.15"/></svg><svg style="left:665px;top:461px" width="7" height="9"><polyline points="0,0 3.5,3 7,0" fill="none" stroke="#111" stroke-width="1.7"/><polyline points="0,4.5 3.5,7.5 7,4.5" fill="none" stroke="#111" stroke-width="1.7"/></svg><svg style="left:676px;top:451px" width="8" height="8"><polyline points="0.5,0.8 3.8,4 7.1,0.8" fill="none" stroke="#111" stroke-width="1.4"/><path d="M0 7H7.6" stroke="#111" stroke-width="1.3"/></svg>
<!-- POPUP -->
<div class="a" style="left:448px;top:147px;width:144px;height:92px;background:#fff;border-radius:4px;box-shadow:0 1px 5px rgba(0,0,0,.38),0 0 0 .5px rgba(0,0,0,.12)"></div><div class="a" style="left:452px;top:207px;width:136px;height:28px;background:#f5e1b0;border-radius:2px"></div><svg style="left:0;top:0" width="685" height="260"><rect x="469.5" y="156.0" width="20.5" height="18.5" rx="1" fill="#fff" stroke="#4da3f5" stroke-width="1"/><rect x="469.5" y="156.0" width="20.5" height="3.2" fill="#4da3f5"/><path d="M483 157.5h1.2M485 157.5h1.2M487 157.5h1.2" stroke="#fff" stroke-width="1"/><path d="M470 165.5H490" stroke="#222" stroke-width="1" stroke-dasharray="2 1"/><path d="M477 162.8L480 159.6L483 162.8ZM477 168.2L480 171.4L483 168.2Z" fill="#6fb13a"/><path d="M480 162.5V164.3M480 166.7V168.5" stroke="#6fb13a" stroke-width="1.6"/><rect x="469.5" y="184.0" width="20.5" height="18.5" rx="1" fill="#fff" stroke="#4da3f5" stroke-width="1"/><rect x="469.5" y="184.0" width="20.5" height="3.2" fill="#4da3f5"/><path d="M483 185.5h1.2M485 185.5h1.2M487 185.5h1.2" stroke="#fff" stroke-width="1"/><path d="M480.5 187V202" stroke="#222" stroke-width="1" stroke-dasharray="2 1"/><path d="M477.3 191.6L474 194.5L477.3 197.4ZM483.7 191.6L487 194.5L483.7 197.4Z" fill="#6fb13a"/><path d="M477 194.5H478.8M482.2 194.5H484" stroke="#6fb13a" stroke-width="1.6"/><rect x="469.5" y="212.0" width="20.5" height="18.5" rx="1" fill="#fff" stroke="#4da3f5" stroke-width="1"/><rect x="469.5" y="212.0" width="20.5" height="3.2" fill="#4da3f5"/><path d="M483 213.5h1.2M485 213.5h1.2M487 213.5h1.2" stroke="#fff" stroke-width="1"/><path d="M477.5 215V230M470 221.5H490" stroke="#222" stroke-width="1" stroke-dasharray="2 1"/><path d="M480.5 218.5H488M482 217.2L480.5 218.5L482 219.8M486.5 217.2L488 218.5L486.5 219.8" fill="none" stroke="#6fb13a" stroke-width="1"/><path d="M473.8 223.5V229M472.3 225L473.8 223.3L475.3 225M472.3 227.5L473.8 229.2L475.3 227.5" fill="none" stroke="#6fb13a" stroke-width="1"/><path d="M484 222.5V229.5M480.5 226H487.5M482.8 223.8L484 222.5L485.2 223.8M482.8 228.2L484 229.5L485.2 228.2M481.8 224.8L480.5 226L481.8 227.2M486.2 224.8L487.5 226L486.2 227.2" fill="none" stroke="#6fb13a" stroke-width="1"/><polyline points="457.5,221.5 460.3,224.3 465.8,218.3" fill="none" stroke="#111" stroke-width="1.5"/></svg><div class="t" style="left:495px;top:158px;">Horizontal Split</div><div class="t" style="left:495px;top:186px;letter-spacing:-.2px">Vertical Split</div><div class="t" style="left:495px;top:214px;letter-spacing:-.32px">Spreadsheet Split</div><svg style="left:527px;top:212px" width="13" height="21" viewBox="0 0 13 21"><path d="M0.7 0.8V17L4.4 13.5L7.2 19.8L9.6 18.8L6.9 12.6H11.8Z" fill="#fff" stroke="#111" stroke-width="1" stroke-linejoin="round"/></svg>
<div class="a" style="left:0;top:0;width:685px;height:1px;background:#6b6b6b"></div>
<div class="a" style="left:0;top:0;width:1px;height:481px;background:#8a8a8a"></div>
<div class="a" style="left:684px;top:0;width:1px;height:481px;background:#8a8a8a"></div>
</body></html>
